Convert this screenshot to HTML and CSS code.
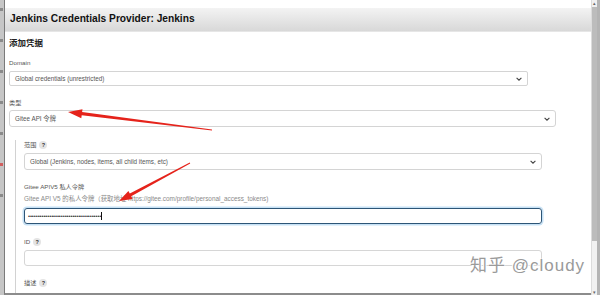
FILE: index.html
```html
<!DOCTYPE html>
<html lang="zh">
<head>
<meta charset="utf-8">
<link rel="stylesheet" href="styles.css">
</head>
<body>
<div class="page">
  <div class="bg-left">
    <span class="frag f1"></span><span class="frag f2"></span><span class="frag f3"></span>
    <span class="frag f4"></span><span class="frag f5"></span><span class="frag red"></span>
    <span class="frag f6"></span>
  </div>
  <div class="dialog">
    <div class="dialog-header">Jenkins Credentials Provider: Jenkins</div>
    <div class="dialog-body">
      <div class="section-title">添加凭据</div>

      <div class="label l-domain">Domain</div>
      <div class="select select-domain">
        <span>Global credentials (unrestricted)</span>
        <svg class="chev" width="6" height="4" viewBox="0 0 6 4"><path d="M0.6 0.8 L3 3.2 L5.4 0.8" fill="none" stroke="#444" stroke-width="1.1"/></svg>
      </div>

      <div class="label l-kind">类型</div>
      <div class="select select-kind">
        <span>Gitee API 令牌</span>
        <svg class="chev" width="6" height="4" viewBox="0 0 6 4"><path d="M0.6 0.8 L3 3.2 L5.4 0.8" fill="none" stroke="#444" stroke-width="1.1"/></svg>
      </div>

      <div class="nested">
        <div class="label l-scope">范围 <span class="help">?</span></div>
        <div class="select select-wide">
          <span>Global (Jenkins, nodes, items, all child items, etc)</span>
          <svg class="chev" width="6" height="4" viewBox="0 0 6 4"><path d="M0.6 0.8 L3 3.2 L5.4 0.8" fill="none" stroke="#444" stroke-width="1.1"/></svg>
        </div>

        <div class="label l-token">Gitee APIV5 私人令牌</div>
        <div class="desc">Gitee API V5 的私人令牌（获取地址 https://gitee.com/profile/personal_access_tokens)</div>
        <div class="input input-focus"><span class="dots">••••••••••••••••••••••••••••••••••••••</span><span class="caret"></span></div>

        <div class="label l-id">ID <span class="help">?</span></div>
        <div class="input input-plain"></div>

        <div class="label l-desc">描述 <span class="help">?</span></div>
      </div>
    </div>
  </div>
  <div class="scrollbar">
    <div class="sb-arrow">▴</div>
    <div class="sb-thumb"></div>
    <div class="sb-track"></div>
    <div class="sb-arrow">▾</div>
  </div>
  <div class="bg-right"></div>
</div>

<svg class="arrows" width="600" height="295" viewBox="0 0 600 295">
  <polygon fill="#e5231b" points="68,112 82.5,109.3 82.1,112.1 212,129.6 212,130.4 81.7,115.3 81.3,118.2"/>
  <polygon fill="#e5231b" points="119,201 128.4,190.9 129.8,193.6 189.8,162.6 190.2,163.4 131.2,196.2 132.6,198.9"/>
</svg>

<div class="watermark">知乎 @cloudy</div>
</body>
</html>
```

FILE: styles.css
```css
html, body {
  margin: 0;
  padding: 0;
}
body {
  width: 600px;
  height: 295px;
  overflow: hidden;
  position: relative;
  background: #ffffff;
  font-family: "Liberation Sans", Arial, "Noto Sans CJK SC", sans-serif;
  color: #333;
}
.page {
  display: flex;
  height: 295px;
}
.bg-left {
  width: 4px;
  background: #c6c6c6;
  display: flex;
  flex-direction: column;
  align-items: flex-start;
  padding-top: 8px;
  box-sizing: border-box;
}
.frag {
  display: block;
  width: 3px;
  height: 3px;
  background: #8a8a8a;
  margin-bottom: 28px;
}
.frag.red { background: #d06060; }
.dialog {
  flex: 1;
  background: #fff;
  border-left: 1px solid #7a7a7a;
  border-bottom: 2px solid #8c8c8c;
  box-sizing: border-box;
  height: 295px;
  overflow: hidden;
  padding-top: 8px;
}
.dialog-header {
  height: 24px;
  line-height: 22px;
  padding-left: 5px;
  background: linear-gradient(#f3f3f3, #d8d8d8);
  border-bottom: 1px solid #e6e6e6;
  box-sizing: border-box;
  font-weight: bold;
  font-size: 10.2px;
  color: #111;
}
.dialog-body {
  padding: 4px 0 0 4px;
}
.section-title {
  font-size: 8.5px;
  font-weight: bold;
  line-height: 14px;
  color: #222;
}
.label {
  font-size: 6.2px;
  line-height: 10px;
  height: 10px;
  color: #555;
  display: flex;
  align-items: center;
  gap: 3px;
}
.l-domain { margin-top: 8px; }
.l-kind { margin-top: 12px; }
.l-scope { margin-top: 13px; }
.l-token { margin-top: 12px; }
.l-id { margin-top: 13px; }
.l-desc { margin-top: 12px; }
.help {
  display: inline-flex;
  width: 8px;
  height: 8px;
  border-radius: 50%;
  background: #e4e4e4;
  color: #333;
  font-size: 5.5px;
  font-weight: bold;
  align-items: center;
  justify-content: center;
}
.select {
  display: flex;
  align-items: center;
  justify-content: space-between;
  border: 1px solid #d4d4d4;
  border-radius: 2px;
  box-sizing: border-box;
  padding: 0 5px 0 5px;
  font-size: 6.3px;
  color: #555;
  background: #fff;
}
.select-domain {
  margin-top: 3px;
  height: 15px;
  width: 519px;
}
.select-kind {
  margin-top: 2px;
  height: 17px;
  width: 547px;
  border-radius: 3px;
}
.select-wide {
  margin-top: 3px;
  height: 17px;
  width: 518px;
  border-radius: 3px;
}
.chev { flex: none; }
.nested {
  margin-left: 6px;
  border-left: 1px solid #d2d2d2;
  padding-left: 8px;
  padding-top: 0;
  height: 170px;
}
.desc {
  margin-top: 2px;
  font-size: 6.4px;
  line-height: 10px;
  color: #8a8a8a;
  white-space: nowrap;
}
.input {
  height: 16px;
  width: 518px;
  box-sizing: border-box;
  border-radius: 3px;
  display: flex;
  align-items: center;
  padding-left: 3px;
}
.input-focus {
  margin-top: 4px;
  border: 1.5px solid #2d5577;
  box-shadow: 0 0 0 1.5px #c6e1f5;
}
.dots {
  font-size: 5.8px;
  color: #333;
  letter-spacing: -0.1px;
  line-height: 8px;
}
.caret {
  width: 1px;
  height: 8px;
  background: #111;
}
.input-plain {
  margin-top: 3px;
  border: 1px solid #d6d6d6;
}
.scrollbar {
  width: 6px;
  background: #f1f1f1;
  display: flex;
  flex-direction: column;
  border-left: 1px solid #dcdcdc;
  box-sizing: border-box;
}
.sb-arrow {
  height: 6px;
  font-size: 5px;
  line-height: 6px;
  text-align: center;
  color: #666;
}
.sb-thumb {
  height: 234px;
  background: #bcbcbc;
  margin: 1px 0;
}
.sb-track { flex: 1; }
.bg-right {
  width: 3px;
  background: #b4b4b4;
}
.arrows {
  position: absolute;
  left: 0;
  top: 0;
  pointer-events: none;
}
.watermark {
  position: absolute;
  left: 470px;
  top: 255px;
  font-size: 17px;
  line-height: 22px;
  color: #9a9a9a;
  letter-spacing: 1px;
  text-shadow: 0 0 1px #fff, 1px 1px 0 #fff, -1px -1px 0 #fff;
  white-space: nowrap;
}
```
